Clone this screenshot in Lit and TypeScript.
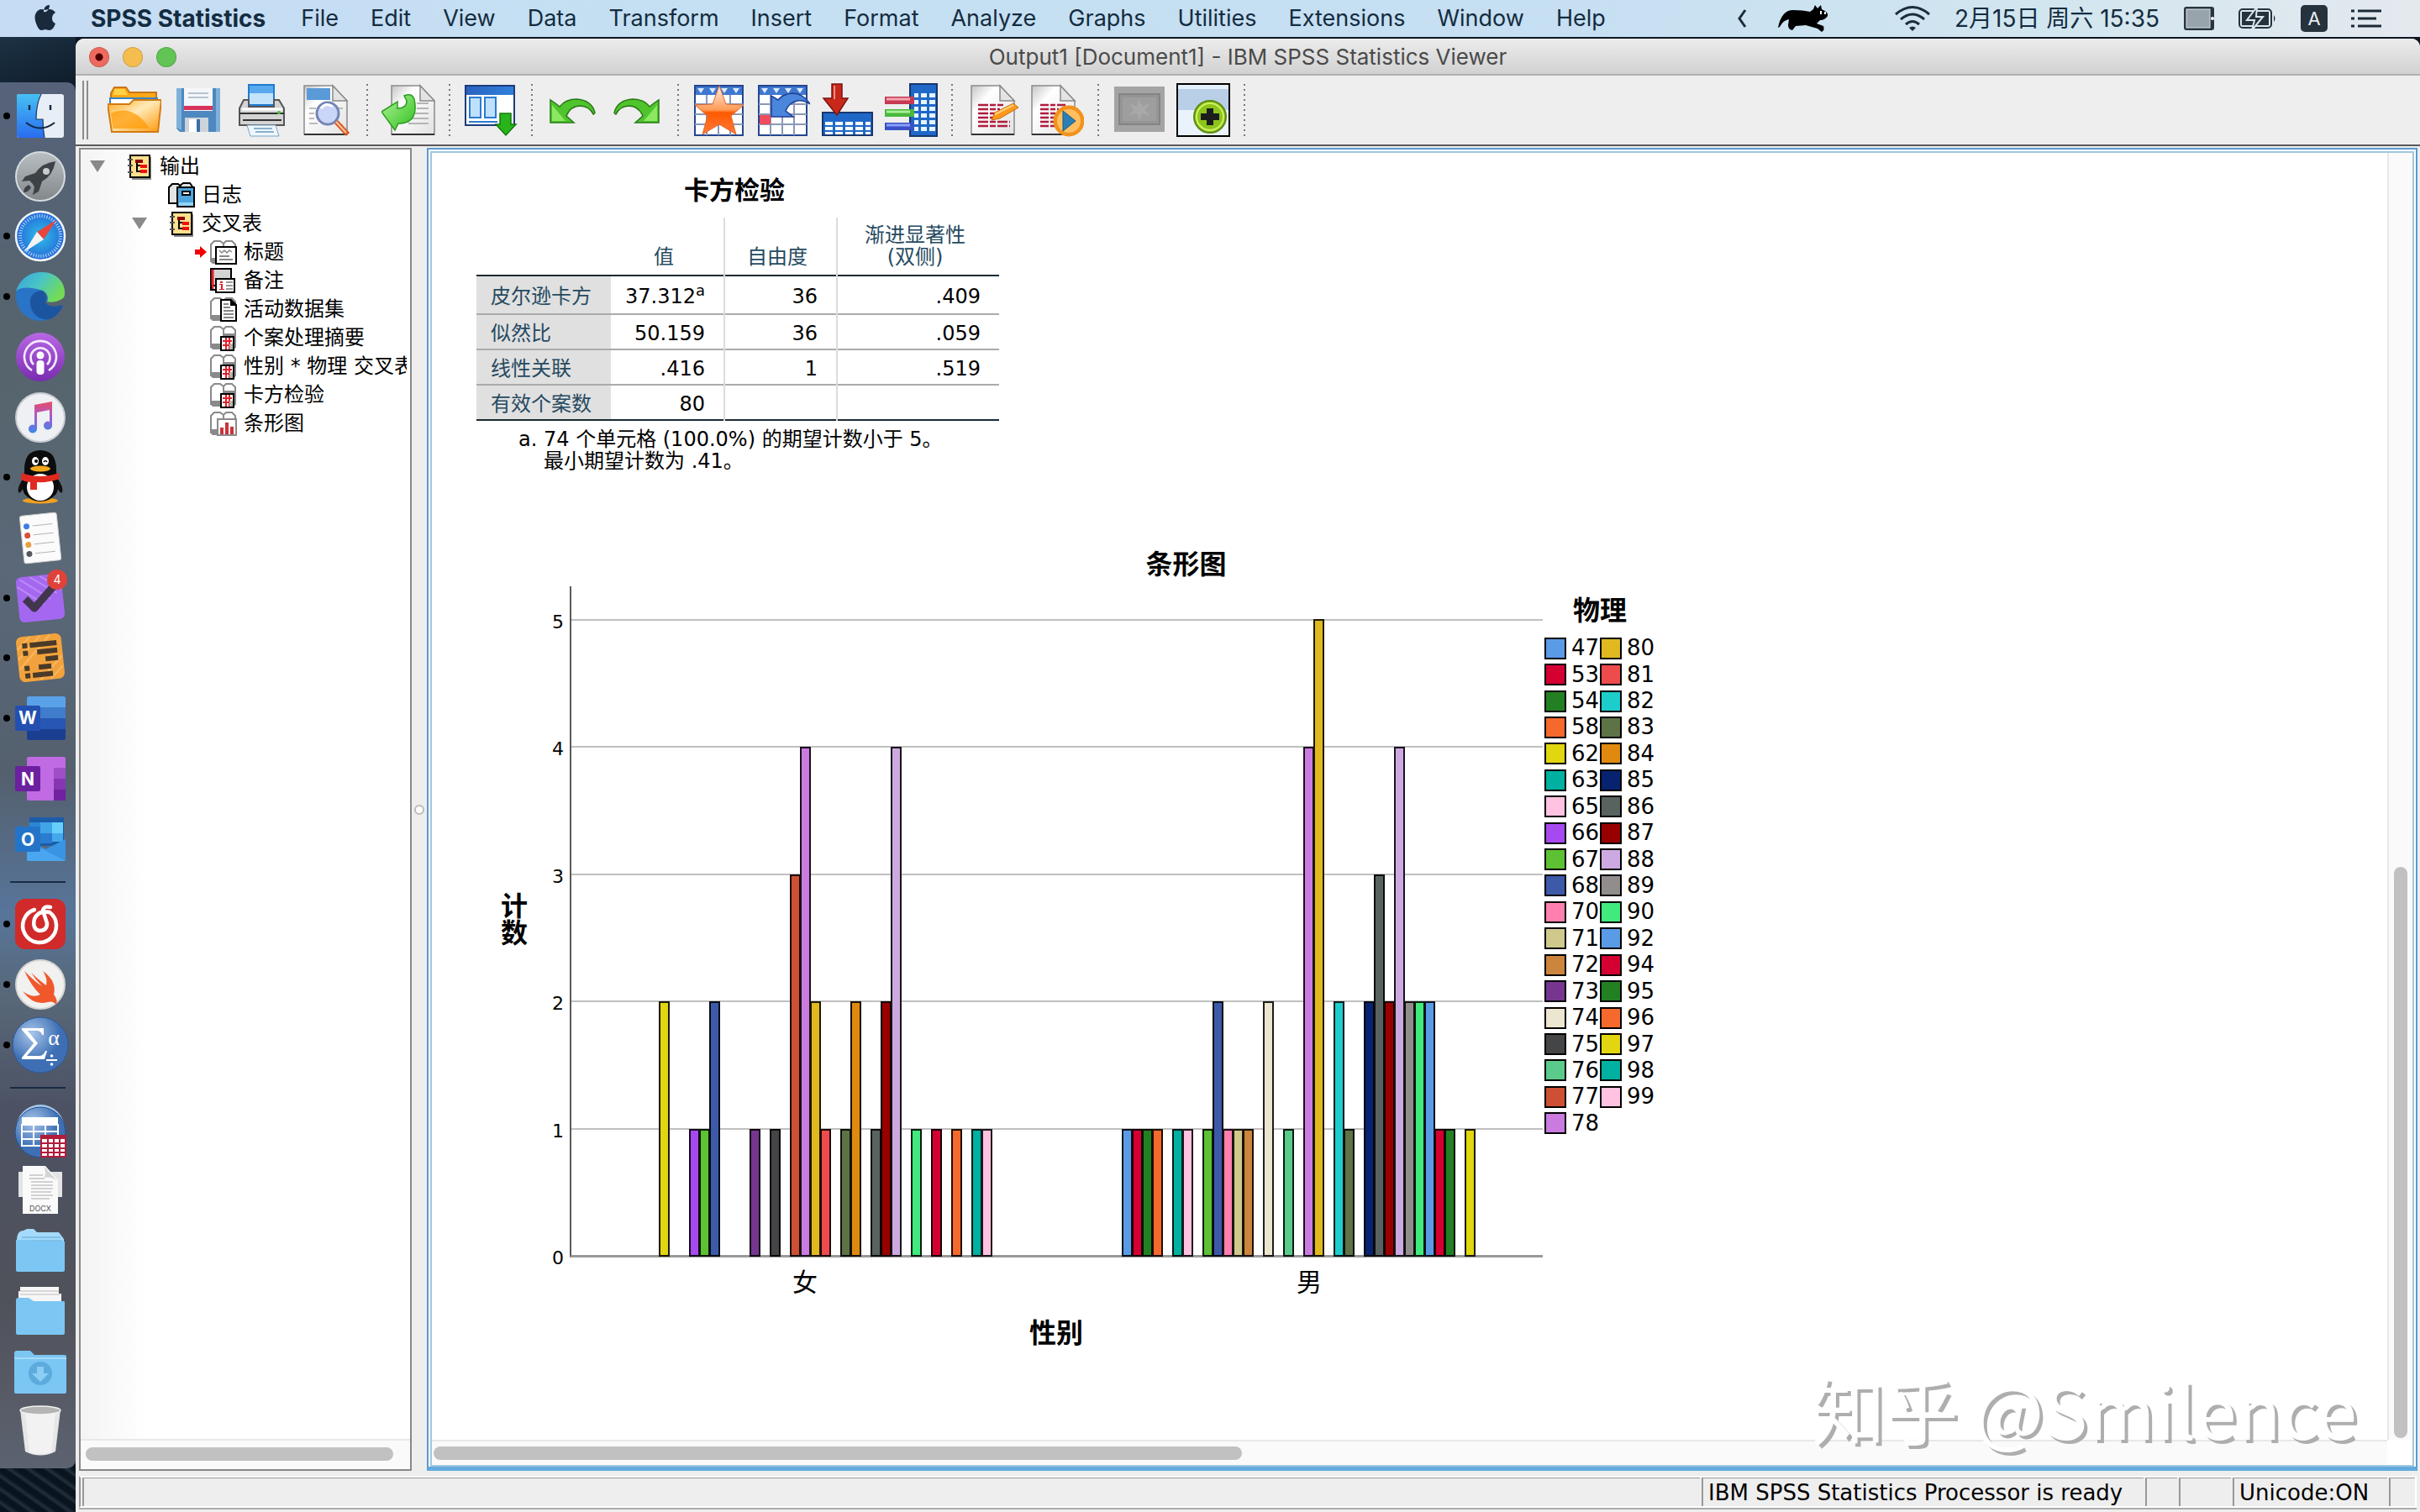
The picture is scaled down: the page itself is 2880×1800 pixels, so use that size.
import { LitElement, html, css, svg, nothing } from "lit";
import { customElement, property } from "lit/decorators.js";

/* ---------- data ---------- */

const MENUS = ["File", "Edit", "View", "Data", "Transform", "Insert", "Format", "Analyze", "Graphs", "Utilities", "Extensions", "Window", "Help"];

const SERIES: [number, string, number, number][] = [
  // score, colour, count for 女, count for 男
  [47, "#5a9be6", 0, 1], [53, "#d50032", 0, 1], [54, "#238022", 0, 1], [58, "#f6692c", 0, 1],
  [62, "#e1d60f", 2, 0], [63, "#00b0a0", 0, 1], [65, "#ffc2e0", 0, 1], [66, "#a749f0", 1, 0],
  [67, "#5cc234", 1, 1], [68, "#3c5aa8", 2, 2], [70, "#ff7faf", 0, 1], [71, "#cfc98c", 0, 1],
  [72, "#cb853c", 0, 1], [73, "#763690", 1, 0], [74, "#ece5d0", 0, 2], [75, "#444547", 1, 0],
  [76, "#5acb8a", 0, 1], [77, "#cd5034", 3, 0], [78, "#c97be0", 4, 4], [80, "#e0b920", 2, 5],
  [81, "#ee4b4c", 1, 0], [82, "#1ccdcb", 0, 2], [83, "#5d7346", 1, 1], [84, "#df8a0e", 2, 0],
  [85, "#07226e", 0, 2], [86, "#586360", 1, 3], [87, "#980000", 2, 2], [88, "#cca9e0", 4, 4],
  [89, "#918d8c", 0, 2], [90, "#40ea7c", 1, 2], [92, "#5a9be6", 0, 2], [94, "#d50032", 1, 1],
  [95, "#238022", 0, 1], [96, "#f6692c", 1, 0], [97, "#e1d60f", 0, 1], [98, "#00b0a0", 1, 0],
  [99, "#ffc2e0", 1, 0],
];
const Y_MAX = 5;

/* ---------- toolbar icons ---------- */

const page = svg`<path d="M6 3h34l17 18v40H6z" fill="url(#pg)" stroke="#8a8a8a" stroke-width="1.5"/><path d="M40 3l17 18H40z" fill="#e4e4e4" stroke="#8a8a8a" stroke-width="1.5"/><path d="M6 61h51" stroke="#333" stroke-width="2"/>`;
const defs = svg`<defs>
  <linearGradient id="pg" x1="0" y1="0" x2="1" y2="1"><stop offset="0" stop-color="#c4c4c4"/><stop offset=".3" stop-color="#fff"/><stop offset="1" stop-color="#e2e2e2"/></linearGradient>
  <linearGradient id="or" x1="0" y1="0" x2="1" y2="1"><stop offset="0" stop-color="#ffa820"/><stop offset=".45" stop-color="#ffeab8"/><stop offset="1" stop-color="#ff9606"/></linearGradient>
  <linearGradient id="st" x1="0" y1="0" x2="0" y2="1"><stop offset="0" stop-color="#fff0e4"/><stop offset=".5" stop-color="#ff9a55"/><stop offset=".55" stop-color="#ff5a00"/><stop offset="1" stop-color="#ff7a3a"/></linearGradient>
  <linearGradient id="gr" x1="0" y1="0" x2="1" y2="1"><stop offset="0" stop-color="#b2f49c"/><stop offset="1" stop-color="#2fc01c"/></linearGradient>
  <linearGradient id="bl" x1="0" y1="0" x2="1" y2="0"><stop offset="0" stop-color="#2b62c0"/><stop offset="1" stop-color="#2f80dc"/></linearGradient>
</defs>`;
const grid = svg`<rect x="3" y="3" width="57" height="59" fill="#fff" stroke="#24468f" stroke-width="2"/><rect x="4" y="4" width="55" height="10" fill="#3f78d0"/><path d="M6 6h8l-4 6zM20 6h8l-4 6zM34 6h8l-4 6zM48 6h8l-4 6z" fill="#dcebff"/><path d="M3 25h57M3 37h57M3 49h57M17 14v48M31 14v48M45 14v48" stroke="#8a98b8" stroke-width="2"/>`;
const undo = svg`<path d="M5 20v27h28l-9-8q5-12 17-12 11 1 15 10 2-1 2-2-4-15-22-16-13 0-20 9l-5-4z" fill="#4fc42c" stroke="#2a7a18" stroke-width="1.5"/><path d="M7 26v19h16z" fill="#8ce860"/>`;

const TOOL: Record<string, unknown> = {
  open: svg`<path d="M4 28V12l4-7h14l4 6h32v8l2 8z" fill="#ffa818" stroke="#c8761a" stroke-width="2"/><path d="M8 7h12l4 7H7z" fill="#ffd24a"/><path d="M3 18h56v9H3z" fill="#fff" stroke="#3b84c4" stroke-width="2"/><path d="M0 25h26l5-5h33l-4 38H5z" fill="url(#or)" stroke="#d47a12" stroke-width="2"/><path d="M4 36q26-12 46 18H6z" fill="#ff9800" opacity=".7"/>`,
  save: svg`<path d="M6 6h50l2 2v50H10l-4-4z" fill="#4d88bf"/><path d="M6 6h6v50l-6-3zM53 6h5v52h-5z" fill="#7fb0da"/><rect x="15" y="6" width="34" height="27" fill="#f4f7fa"/><path d="M20 12h24M20 17h24" stroke="#b8c4d0" stroke-width="2"/><path d="M15 27h34v5H15z" fill="#d9335c"/><rect x="16" y="41" width="28" height="17" fill="#ccd4da"/><rect x="21" y="43" width="9" height="15" fill="#fff"/><rect x="30" y="43" width="4" height="15" fill="#3a6ea6"/>`,
  print: svg`<path d="M16 2h30v24H16z" fill="#c3e3fb" stroke="#1f7bd0" stroke-width="2"/><path d="M17 3h28v9H17z" fill="#5aa9ee"/><path d="M10 20h6v8h30v-8h6l6 10v20H5V30z" fill="#d4d4d4" stroke="#555" stroke-width="2"/><path d="M5 36h53M9 44h46" stroke="#333" stroke-width="2"/><path d="M8 31h48" stroke="#fff" stroke-width="3"/><circle cx="52" cy="35" r="2" fill="#4fc33a"/><path d="M14 50h34l4 13H18z" fill="#eef7ff" stroke="#7aa4c4"/><path d="M22 54h22M24 58h22" stroke="#8ab0cc" stroke-width="2"/>`,
  preview: svg`${page}<path d="M9 6h28v14H9z" fill="#5a9ad8"/><path d="M12 30h8M12 36h6M12 42h6M12 48h10M40 30h12M44 50h8" stroke="#bbb" stroke-width="2"/><circle cx="34" cy="36" r="13" fill="#c9d6f8" stroke="#7384b4" stroke-width="3"/><path d="M26 30q6-8 14-2" stroke="#fff" stroke-width="3" fill="none"/><path d="M44 46l14 15" stroke="#d65a28" stroke-width="6"/><path d="M44 46l12 13" stroke="#ffc49a" stroke-width="2"/>`,
  export: svg`<g transform="translate(6 0)">${page}</g><path d="M42 24h14M42 30h14M40 36h16M36 42h20M32 48h24" stroke="#b4b4b4" stroke-width="2"/><path d="M0 34l19-12v8q11 0 11-9l-3-6q9-4 12 4 4 19-6 26-5 3-13 3l-4 8z" fill="url(#gr)" stroke="#2f9c22" stroke-width="1.5"/>`,
  columns: svg`<rect x="2" y="3" width="58" height="47" fill="#fff" stroke="#1c3c7c" stroke-width="2"/><rect x="3" y="4" width="56" height="10" fill="url(#bl)"/><rect x="7" y="17" width="13" height="24" fill="#bfe0fb" stroke="#2b7bd0" stroke-width="2"/><rect x="25" y="17" width="13" height="24" fill="#bfe0fb" stroke="#2b7bd0" stroke-width="2"/><path d="M6 46h34" stroke="#2b7bd0" stroke-width="2"/><path d="M43 36h13v13h6L50 62 38 49h5z" fill="#28b41a" stroke="#117a0a" stroke-width="1.5"/>`,
  undo,
  redo: svg`<g transform="matrix(-1 0 0 1 63 0)">${undo}</g>`,
  star: svg`${grid}<path d="M32 3l8 22 21 1-15 13 6 22-20-12-20 12 6-22L3 26l21-1z" fill="url(#st)" stroke="#e06a2c"/>`,
  goto: svg`${grid}<rect x="4" y="38" width="13" height="11" fill="#f04a5c"/><path d="M18 15v25h26l-9-7q4-10 14-12 8-1 15 4-8-13-21-13-12 1-17 8z" fill="#4a86dc" stroke="#1c3f94" stroke-width="1.5"/>`,
  insertCase: svg`<rect x="3" y="35" width="59" height="27" fill="#1f68c8" stroke="#18366e" stroke-width="2"/><path d="M6 46h9v4H6zM18 46h9v4h-9zM30 46h9v4h-9zM42 46h9v4h-9zM54 46h6v4h-6zM6 52h9v4H6zM18 52h9v4h-9zM30 52h9v4h-9zM42 52h9v4h-9zM54 52h6v4h-6zM6 58h9v3H6zM18 58h9v3h-9zM30 58h9v3h-9zM42 58h9v3h-9zM54 58h6v3h-6z" fill="#fff"/><path d="M14 1h12v17h7L20 38 4 18h10z" fill="#c8281c" stroke="#7c120c" stroke-width="1.5"/><path d="M17 3v16" stroke="#f08a7a" stroke-width="2"/>`,
  variables: svg`<rect x="31" y="1" width="32" height="62" fill="#1f68c8" stroke="#18366e" stroke-width="2"/><path d="M36 12h5v5h-5zM44 12h7v5h-7zM54 12h7v5h-7zM36 20h5v5h-5zM44 20h7v5h-7zM54 20h7v5h-7zM36 28h5v5h-5zM44 28h7v5h-7zM54 28h7v5h-7zM36 36h5v5h-5zM44 36h7v5h-7zM54 36h7v5h-7zM36 44h5v5h-5zM44 44h7v5h-7zM54 44h7v5h-7zM36 52h5v5h-5zM44 52h7v5h-7zM54 52h7v5h-7z" fill="#e6f4ff"/><path d="M1 16h35v9H1z" fill="#c63a52"/><path d="M3 19h28" stroke="#f4a4b0" stroke-width="3"/><path d="M1 31h35v9H1z" fill="#4ab83c"/><path d="M3 34h28" stroke="#a8f098" stroke-width="3"/><path d="M1 47h35v9H1z" fill="#3a50c8"/><path d="M3 50h28" stroke="#8aa0f4" stroke-width="3"/>`,
  edit: svg`${page}<path d="M14 26h30M14 31h26M14 36h22M14 41h20M14 46h38M14 51h38" stroke="#b01c3c" stroke-width="2.5" stroke-dasharray="12 2 7 2"/><path d="M30 44l4-9 22-11 6 5-22 13z" fill="#ff9a1c" stroke="#c86a0c"/><path d="M34 37l22-11" stroke="#ffd27a" stroke-width="2"/>`,
  run: svg`<g transform="translate(-4 0)">${page}</g><path d="M12 26h30M12 31h22M12 36h18M12 41h16M12 46h16M12 51h18" stroke="#b01c3c" stroke-width="2.5" stroke-dasharray="10 2 6 2"/><circle cx="46" cy="45" r="15" fill="#fff" stroke="#f0921c" stroke-width="7"/><circle cx="46" cy="45" r="14" fill="#ffbe60"/><path d="M39 33l15 12-15 12z" fill="#2a7fb4" stroke="#175a88"/>`,
  preview2: svg`<rect x="2" y="4" width="60" height="54" fill="#a4a4a4"/><rect x="8" y="13" width="48" height="36" fill="#959595" stroke="#848484" stroke-width="2"/><rect x="12" y="17" width="40" height="28" fill="#9e9e9e"/><path d="M32 19l3 9 9-4-5 8 6 7-10-3-3 9-3-9-10 3 6-7-5-8 9 4z" fill="#a8a8a8"/>`,
  add: svg`<rect x="1" y="1" width="62" height="62" fill="#eaf3fc" stroke="#000" stroke-width="2"/><path d="M2 6h60v26H2z" fill="#b9cfe8"/><path d="M2 2h60v5H2z" fill="#e4f0fc"/><circle cx="40" cy="40" r="19" fill="#8cc41c" stroke="#5c8c14" stroke-width="2"/><circle cx="40" cy="40" r="16" fill="none" stroke="#d0f060" stroke-width="2"/><path d="M36 30h8v6h7v8h-7v6h-8v-6h-7v-8h7z" fill="#1c1c1c"/>`,
};
const TOOL_GROUPS: [string, string][][] = [
  [["open", "Open"], ["save", "Save"], ["print", "Print"], ["preview", "Print Preview"]],
  [["export", "Export"]],
  [["columns", "Recall Dialogs"]],
  [["undo", "Undo"], ["redo", "Redo"]],
  [["star", "Go to Data"], ["goto", "Go to Case"], ["insertCase", "Go to Variable"], ["variables", "Variables"]],
  [["edit", "Edit Script"], ["run", "Run Script"]],
  [["preview2", "Designate Window"], ["add", "Select Last Output"]],
];

/* ---------- dock icons ---------- */

const DOCK: Record<string, unknown> = {
  finder: svg`<rect x="4" y="6" width="56" height="52" rx="3" fill="#e8eef6"/><path d="M7 6h26q-6 12-6 30h8q0 12 2 22H7q-3 0-3-3V9q0-3 3-3z" fill="url(#fd)"/><path d="M33 6q-6 12-6 30h8q0 12 2 22" fill="none" stroke="#1c3c66" stroke-width="1.2"/><path d="M19 19v6M44 19v6" stroke="#12263c" stroke-width="2.4"/><path d="M15 40q17 13 34 0" fill="none" stroke="#12263c" stroke-width="2"/>`,
  launchpad: svg`<circle cx="32" cy="32" r="29" fill="url(#lp)" stroke="#d4dce0" stroke-width="2"/><path d="M50 14q-16 2-24 14l-12 4-4 6 9-1q4 3 6 8l-2 9 7-4 4-12q13-7 16-24z" fill="#3c4246"/><circle cx="39" cy="26" r="4" fill="#c8ccce"/><path d="M18 42q-6 3-6 9 6 0 9-6z" fill="#3c4246"/>`,
  safari: svg`<circle cx="32" cy="32" r="29" fill="url(#sf)" stroke="#f0f4f8" stroke-width="2.5"/><circle cx="32" cy="32" r="24" fill="none" stroke="#bfe0fa" stroke-width="4" stroke-dasharray="1 2"/><path d="M51 13L28 27l8 9z" fill="#e8453c"/><path d="M13 51l15-24 8 9z" fill="#f2f4f6"/>`,
  edge: svg`<circle cx="32" cy="32" r="29" fill="#2a74c8"/><path d="M3 26C8 10 20 3 34 3c18 0 28 13 27 26-1 10-10 13-22 11 4-5 2-14-7-16C20 21 8 20 3 26z" fill="url(#eg)"/><path d="M20 40c-1-9 5-15 14-15 5 2 7 8 4 14 6 4 14 5 21 3C54 56 43 61 36 59c-9-2-15-8-16-19z" fill="#1b55a0"/><path d="M34 27c5 2 7 8 4 13 6 5 16 5 24 0v-8l-6 4q-8 4-17 2 4-8-5-11z" fill="#56626e"/>`,
  podcasts: svg`<circle cx="32" cy="32" r="29" fill="url(#pc)"/><g fill="none" stroke="#f6eaff" stroke-width="2.6"><path d="M22 48a19 19 0 1 1 20 0"/><path d="M24 41a11.500 11.500 0 1 1 16 0"/></g><circle cx="32" cy="30" r="4.500" fill="#fff"/><rect x="27.500" y="36" width="9" height="17" rx="4" fill="#fff"/>`,
  music: svg`<circle cx="32" cy="32" r="29" fill="#eef0f4" stroke="#c8ccd2" stroke-width="2"/><path d="M25 17l21-4v29a5 5 0 1 1-3-5V23l-15 3v20a5 5 0 1 1-3-5z" fill="url(#mu)"/>`,
  qq: svg`<ellipse cx="32" cy="60" rx="21" ry="3.500" fill="#f0a020"/><path d="M12 33Q4 44 6 50q2 2 5-4zM52 33q8 11 6 17-2 2-5-4z" fill="#101010"/><path d="M13 26Q12 0 32 0t19 26q5 16 0 26-8 9-19 9t-19-9q-5-10 0-26z" fill="#0c0c0c"/><ellipse cx="32" cy="44" rx="16" ry="16" fill="#fff"/><ellipse cx="26" cy="13" rx="4" ry="5" fill="#fff"/><ellipse cx="38" cy="13" rx="4" ry="5" fill="#fff"/><circle cx="27" cy="13" r="2" fill="#000"/><path d="M36 14q2-3 4 0" stroke="#000" fill="none" stroke-width="1.500"/><ellipse cx="32" cy="22" rx="12" ry="3.500" fill="#f5a81c"/><path d="M10 27q22 8 44 0l1 7q-14 5-27 4v9h-8v-9q-6 0-11-3z" fill="#e02a20"/>`,
  reminders: svg`<g transform="rotate(-6 32 32)"><rect x="10" y="4" width="44" height="57" rx="3" fill="#fbfbfb" stroke="#d0d0d0"/><circle cx="17" cy="17" r="3.500" fill="#3b7ee8"/><circle cx="17" cy="28" r="3.500" fill="#d8503c"/><circle cx="17" cy="39" r="3.500" fill="#e8a040"/><circle cx="17" cy="50" r="3.500" fill="#55585c"/><path d="M24 17h24M24 28h24M24 39h24M24 50h24" stroke="#b4b4b4"/></g>`,
  omnifocus: svg`<g transform="rotate(-6 32 32)"><rect x="5" y="5" width="54" height="54" rx="6" fill="#a468f0"/><path d="M6 16l30 24M10 8l34 26M22 6l30 22M34 6l24 18" stroke="#bb8af6" stroke-width="2"/></g><path d="M14 33l11 11 27-31" fill="none" stroke="#42364e" stroke-width="9" stroke-linejoin="round"/><circle cx="52" cy="10" r="12" fill="#e0423a"/><text x="52" y="15" text-anchor="middle" font-size="14" fill="#fff" font-family="Inter, sans-serif">4</text>`,
  outliner: svg`<g transform="rotate(-6 32 32)"><rect x="5" y="5" width="54" height="54" rx="7" fill="#f2a23c"/><path d="M6 20l16-14M6 32L34 6M6 44L46 6M30 58l28-26M42 58l16-14" stroke="#f8b862" stroke-width="2"/><path d="M12 13h6v6h-6zM21 13h32v6H21zM12 22h6v6h-6zM29 22h24v6H29zM38 31h15v6H38zM12 40h6v6h-6zM29 40h15v6H29zM12 49h6v6h-6zM21 49h24v6H21z" fill="#4a3a28"/></g>`,
  word: svg`<rect x="16" y="6" width="46" height="52" rx="2" fill="#1b3f90"/><path d="M16 8q0-2 2-2h42q2 0 2 2v11H16z" fill="#5aa2e8"/><path d="M16 19h46v13H16z" fill="#3f7ccc"/><path d="M16 32h46v13H16z" fill="#2657b4"/><rect x="2" y="17" width="30" height="30" rx="2" fill="#2350b0"/><text x="17" y="39" text-anchor="middle" font-size="21" font-weight="700" fill="#fff" font-family="Inter, sans-serif">W</text>`,
  onenote: svg`<rect x="16" y="6" width="46" height="52" rx="2" fill="#c06ae4"/><path d="M48 19h14v13H48z" fill="#a04ec8"/><path d="M48 32h14v13H48z" fill="#8636b0"/><path d="M48 45h14v13H48z" fill="#7022a0"/><rect x="2" y="17" width="30" height="30" rx="2" fill="#6c20a0"/><text x="17" y="40" text-anchor="middle" font-size="21" font-weight="700" fill="#fff" font-family="Inter, sans-serif">N</text>`,
  outlook: svg`<path d="M19 6h41v34H19z" fill="#1a5ca8"/><path d="M19 12h13v13H19z" fill="#2c86d4"/><path d="M32 12h14v13H32z" fill="#40a4e8"/><path d="M46 12h13v13H46z" fill="#66d0fa"/><path d="M32 25h14v12H32z" fill="#2a7cd0"/><path d="M46 25h13v10H46z" fill="#44a8ec"/><path d="M16 32l22 12 24-12v24q0 2-2 2H18q-2 0-2-2z" fill="#3a94e4"/><path d="M16 34l46 24H18q-2 0-2-2z" fill="#4aa6ee"/><rect x="2" y="17" width="30" height="30" rx="2" fill="#2374c8"/><text x="17" y="40" text-anchor="middle" font-size="21" font-weight="700" fill="#fff" font-family="Inter, sans-serif">O</text>`,
  netease: svg`<rect x="2" y="2" width="60" height="60" rx="12" fill="#d02a2a"/><path d="M25 15A20 20 0 1 0 43 18q-13-3-18 8-3 12 6 14 9 0 9-9l-5-15q1-6 9-4" fill="none" stroke="#fff" stroke-width="4.500" stroke-linecap="round"/>`,
  swift: svg`<circle cx="32" cy="32" r="29" fill="#f1f1f0" stroke="#d4d4d2" stroke-width="2"/><path d="M13 16q14 14 21 18-8-8-13-16 12 11 18 15 2-8-4-17 17 12 13 28 5 6 3 12-4-5-10-3-17 5-30-13 12 9 21 4-10-9-19-28z" fill="#f0582c"/>`,
  spss: svg`<circle cx="32" cy="32" r="33" fill="url(#sp)" stroke="#2c5898"/><path d="M10 12h26v8h-2q-1-5-7-5H17l12 15-13 15h14q6 0 8-6h2l-3 10H10v-2l14-17-14-16z" fill="#fff"/><text x="48" y="32" text-anchor="middle" font-size="26" fill="#fff" font-family="Liberation Serif, serif">α</text><path d="M39 50h13" stroke="#fff" stroke-width="2"/><circle cx="45.500" cy="45" r="1.800" fill="#fff"/><circle cx="45.500" cy="55" r="1.800" fill="#fff"/>`,
  dataset: svg`<circle cx="32" cy="30" r="29" fill="#a8c8ea"/><circle cx="32" cy="34" r="30" fill="url(#sp)" stroke="#24508e"/><rect x="10" y="16" width="43" height="9" fill="#fff"/><path d="M10 25h43v25H10zM10 33h43M10 42h43M24 25v25M38 25v25" fill="none" stroke="#fff" stroke-width="2"/><rect x="32" y="37" width="31" height="27" fill="#b01c3c"/><path d="M34 42h6v4h-6zM42 42h5v4h-5zM49 42h5v4h-5zM56 42h5v4h-5zM34 48h6v4h-6zM42 48h5v4h-5zM49 48h5v4h-5zM56 48h5v4h-5zM34 54h6v3h-6zM42 54h5v3h-5zM49 54h5v3h-5zM56 54h5v3h-5zM34 59h6v3h-6zM42 59h5v3h-5zM49 59h5v3h-5zM56 59h5v3h-5z" fill="#fff"/>`,
  docx: svg`<rect x="6" y="10" width="52" height="30" fill="#e4e4e4"/><path d="M11 3h27l15 17v40H11z" fill="#fafafa"/><path d="M36 3q4 10 0 14 10-2 17 5z" fill="#d4d4d4"/><path d="M19 14h16M19 18h18M21 22h26M21 26h26M21 30h26M21 34h24M21 38h26M21 42h22" stroke="#a8a8a8"/><text x="32" y="57" text-anchor="middle" font-size="9" fill="#555" font-family="Inter, sans-serif">DOCX</text>`,
  folder: svg`<path d="M4 20q0-12 8-12l4-2h8l4 4h26l6 8v10H4z" fill="#a4dafa"/><path d="M10 16h46M8 20h50" stroke="#5aa6d8"/><path d="M3 19h18l4 2h36v34q0 2-2 2H5q-2 0-2-2z" fill="#7cc6f4"/>`,
  folderDocs: svg`<path d="M8 3h46v8h3v16H6V8h2z" fill="#f6f6f6"/><path d="M8 8h46M8 12h48" stroke="#bcbcbc"/><path d="M3 19q0-3 3-3h12l6 4h36q1 0 1 2v36q0 2-2 2H5q-2 0-2-2z" fill="#7cc6f4"/>`,
  downloads: svg`<path d="M1 10q0-3 3-3h16l5 5h36q2 0 2 2v42q0 2-2 2H3q-2 0-2-2z" fill="#7cc6f4"/><path d="M1 16h62" stroke="#a4dafa" stroke-width="2"/><circle cx="32" cy="34" r="14" fill="#5cabdc"/><path d="M28 26h8v8h6L32 44 22 34h6z" fill="#8ccdf4"/>`,
  trash: svg`<path d="M8 6h48l-6 50q-18 9-36 0z" fill="#e6e6e6"/><path d="M14 10l5 47q13 4 26 0l5-47z" fill="#f2f2f2"/><ellipse cx="32" cy="7" rx="24" ry="5" fill="#b4b4b4" stroke="#f2f2f2" stroke-width="1.500"/>`,
};
const dockDefs = svg`<defs>
  <linearGradient id="fd" x1="0" y1="0" x2="0" y2="1"><stop offset="0" stop-color="#46c0f4"/><stop offset="1" stop-color="#2a6cf0"/></linearGradient>
  <linearGradient id="lp" x1="0" y1="0" x2="0" y2="1"><stop offset="0" stop-color="#b8bec2"/><stop offset="1" stop-color="#82888a"/></linearGradient>
  <radialGradient id="sf"><stop offset="0" stop-color="#30c0e8"/><stop offset="1" stop-color="#2468d8"/></radialGradient>
  <linearGradient id="eg" x1="0" y1="0" x2="1" y2=".5"><stop offset="0" stop-color="#3aa0dc"/><stop offset=".5" stop-color="#48c4c8"/><stop offset="1" stop-color="#74dc54"/></linearGradient>
  <linearGradient id="pc" x1="0" y1="0" x2="0" y2="1"><stop offset="0" stop-color="#b868e4"/><stop offset="1" stop-color="#7a2cb0"/></linearGradient>
  <linearGradient id="mu" x1="0" y1="0" x2="0" y2="1"><stop offset="0" stop-color="#e84c68"/><stop offset=".5" stop-color="#a45ad0"/><stop offset="1" stop-color="#3a8ae8"/></linearGradient>
  <radialGradient id="sp" cx=".35" cy=".3"><stop offset="0" stop-color="#a8c6ea"/><stop offset="1" stop-color="#3e6fb4"/></radialGradient>
</defs>`;
const DOCK_ITEMS: [string, string, boolean][] = [
  ["finder", "Finder", true], ["launchpad", "Launchpad", false], ["safari", "Safari", true], ["edge", "Edge", true],
  ["podcasts", "Podcasts", false], ["music", "Music", false], ["qq", "QQ", true], ["reminders", "Reminders", false],
  ["omnifocus", "OmniFocus", true], ["outliner", "OmniOutliner", true], ["word", "Word", true], ["onenote", "OneNote", false],
  ["outlook", "Outlook", false], ["-", "", false], ["netease", "NetEase Music", true], ["swift", "Swift Playgrounds", true],
  ["spss", "SPSS Statistics", true], ["-", "", false], ["dataset", "Data stack", false], ["docx", "Documents stack", false],
  ["folder", "Folder", false], ["folderDocs", "Documents", false], ["downloads", "Downloads", false], ["trash", "Trash", false],
];

/* ---------- outline icons ---------- */

const bookBack = svg`<path d="M1 26V6l4-4h7l4 3 3-3h7l4 4v20z" fill="#fff" stroke="#8a8a8a" stroke-width="2"/><path d="M1 22h12v7H3l-2-2z" fill="#8a8a8a"/><path d="M16 5v12" stroke="#9a8a8a" stroke-width="2"/>`;
const tableBook = svg`${bookBack}<path d="M15 10h15v18H15z" fill="#8a8a8a"/><rect x="13" y="14" width="15" height="16" fill="#fff" stroke="#000" stroke-width="2"/><path d="M15 19h11M15 24h11M19 15v14M23 15v14" stroke="#e0202c" stroke-width="2"/><path d="M23 22h4v7h-4z" fill="#b4b4a8"/>`;
const LEAF: Record<string, unknown> = {
  root: svg`<rect x="7" y="4" width="23" height="27" fill="#888"/><rect x="5" y="2" width="23" height="26" fill="#ffe08c" stroke="#000" stroke-width="2"/><path d="M2 7h6M2 14h6M2 22h6" stroke="#555" stroke-width="2"/><path d="M13 9v12h5M13 14h5" stroke="#000" stroke-width="2" fill="none"/><path d="M11 7h9v4h-9z" fill="#8c0000"/><path d="M17 13h8v4h-8zM17 19h8v4h-8z" fill="#f01010"/>`,
  log: svg`<path d="M1 25V6l4-4h7l3 3v20z" fill="#e4e4e4" stroke="#000" stroke-width="2"/><path d="M14 4l4-3h8l3 4" fill="#ddd" stroke="#000" stroke-width="2"/><rect x="11" y="6" width="20" height="23" fill="#4ea4dc" stroke="#000" stroke-width="2"/><path d="M13 24h17v4H13z" fill="#90d4f6"/><rect x="17" y="11" width="9" height="4" fill="#fff" stroke="#000" stroke-width="2"/>`,
  title: svg`${bookBack}<rect x="7" y="9" width="24" height="20" fill="#fff" stroke="#000" stroke-width="2"/><path d="M11 13l3 3 3-3 3 3 3-3 3 2" stroke="#888" fill="none" stroke-width="1.500"/><path d="M11 20h12M11 24h16" stroke="#888" stroke-width="2"/>`,
  notes: svg`<path d="M1 1h24v20H1z" fill="#d4d4d4" stroke="#000" stroke-width="2"/><path d="M3 2v24" stroke="#e0202c" stroke-width="3"/><path d="M1 20v6h6" stroke="#000" stroke-width="2" fill="none"/><rect x="7" y="13" width="22" height="16" fill="#fff" stroke="#000" stroke-width="2"/><path d="M12 16h3v2h-3zM11 19h4v6h2v1h-6v-1h2v-5h-2z" fill="#e0202c"/><path d="M19 17h8M19 21h8M19 25h8" stroke="#999" stroke-width="2"/>`,
  dataset: svg`${bookBack}<path d="M13 4h12l6 6v19H13z" fill="#fff" stroke="#000" stroke-width="2"/><path d="M24 4v7h7z" fill="#000"/><path d="M16 9h6M16 13h8M16 17h12M16 21h12M16 25h12" stroke="#888" stroke-width="2"/>`,
  table: tableBook,
  chart: svg`${bookBack}<rect x="9" y="10" width="22" height="19" fill="#fff" stroke="#8a8a8a" stroke-width="2"/><path d="M14 28v-8M20 28V14M26 28v-9" stroke="#c8343c" stroke-width="4"/>`,
};
const TREE: [number, string, string, boolean, boolean][] = [
  [0, "root", "输出", true, false], [1, "log", "日志", false, false], [1, "root", "交叉表", true, false],
  [2, "title", "标题", false, true], [2, "notes", "备注", false, false], [2, "dataset", "活动数据集", false, false],
  [2, "table", "个案处理摘要", false, false], [2, "table", "性别 * 物理 交叉表", false, false],
  [2, "table", "卡方检验", false, false], [2, "chart", "条形图", false, false],
];

const reset = css`
  * { box-sizing: border-box; }
  button { appearance: none; border: 0; background: none; padding: 0; margin: 0; font: inherit; color: inherit; text-align: left; }
  svg { display: block; }
`;

@customElement("mac-menu-bar")
class MacMenuBar extends LitElement {
  static styles = [reset, css`
    :host { display: flex; align-items: center; justify-content: space-between; height: 44px; padding: 0 46px 0 40px;
      background: linear-gradient(90deg, #c6dcf4 0, #c5e0f2 30%, #c6dff2 65%, #d2e6ef 85%, #e4e9ee 100%);
      color: #142c40; font: 27px/44px Inter, "Noto Sans CJK SC", sans-serif; }
    nav, .status { display: flex; align-items: center; }
    nav { gap: 38px; }
    .app { font-size: 28px; font-weight: 700; padding: 0 4px 0 2px; }
    .status { gap: 28px; font-size: 28px; }
    .cat { margin: 0 48px 0 6px; }
  `];
  render() {
    return html`
      <nav aria-label="Menu bar">
        <button aria-label="Apple"><svg width="28" height="32" viewBox="0 0 28 32"><path d="M19 0q0 5-3 7-2 2-4 1 0-5 3-7 2-1 4-1zM22 16q0-5 4-7-3-4-7-4-3 0-5 1-2-1-5-1-3 0-6 4-3 5 0 13 3 8 6 8 2 0 5-1 3 1 5 1 4 0 7-8-4-2-4-6z" fill="#182a3c"/></svg></button>
        <button class="app">SPSS Statistics</button>
        ${MENUS.map((m) => html`<button>${m}</button>`)}
      </nav>
      <div class="status">
        <svg width="14" height="24" viewBox="0 0 14 24"><path d="M11 2L4 12l7 10" fill="none" stroke="#1c2c3c" stroke-width="3"/></svg>
        <svg class="cat" width="64" height="32" viewBox="0 0 64 32"><path d="M2 27Q6 6 20 6q12 0 20 2l4-3 2-5 3 4 4-4 1 5q8 3 7 8-3 5-9 5l-4 4 8 3q2 5-2 7l-5-4-14-4-12 1-4 5q-5-1-5-6l1-7Q8 18 4 26z" fill="#000"/><path d="M53 7v4M58 8v3" stroke="#fff" stroke-width="2"/></svg>
        <svg width="44" height="32" viewBox="0 0 44 32" fill="none" stroke="#1c2c3c" stroke-width="3"><path d="M2 11q20-17 40 0M8 17q14-12 28 0M14 23q8-7 16 0"/><path d="M18 27l4 4 4-4q-4-3-8 0z" fill="#1c2c3c" stroke="none"/></svg>
        <span>2月15日 周六 15:35</span>
        <svg width="38" height="30" viewBox="0 0 38 30"><rect x="1" y="1" width="36" height="28" rx="3" fill="#2a343e"/><rect x="4" y="4" width="28" height="22" fill="#98a4ac" stroke="#d8e2e8" stroke-width="1"/><circle cx="35" cy="15" r="2" fill="#fff"/></svg>
        <svg width="46" height="28" viewBox="0 0 46 28"><rect x="1" y="3" width="38" height="22" rx="4" fill="none" stroke="#26323c" stroke-width="2"/><rect x="4" y="6" width="32" height="16" fill="#26323c"/><path d="M42 10q3 4 0 8z" fill="#26323c"/><path d="M22 0L10 16h9l-3 12 13-16h-8z" fill="#26323c" stroke="#dce8f0" stroke-width="2"/></svg>
        <svg width="32" height="32" viewBox="0 0 32 32"><rect width="32" height="32" rx="5" fill="#26323c"/><text x="16" y="24" text-anchor="middle" font-size="22" fill="#e8eef2" font-family="Inter, sans-serif">A</text></svg>
        <svg width="36" height="22" viewBox="0 0 36 22" stroke="#1c2a36" stroke-width="3"><path d="M0 2h4M8 2h28M0 11h4M8 11h22M0 20h4M8 20h28"/></svg>
      </div>`;
  }
}

@customElement("mac-dock")
class MacDock extends LitElement {
  static styles = [reset, css`
    :host { display: flex; flex-direction: column; width: 90px; padding: 54px 0 52px;
      background: linear-gradient(160deg, #1c3244, #0e1a28) top / 100% 66px no-repeat,
        repeating-linear-gradient(35deg, #0a141e 0 6px, #22303e 9px, #0c1824 13px); }
    ul { flex: 1; display: flex; flex-direction: column; list-style: none; margin: 0; padding: 4px 0 8px;
      border-radius: 0 10px 10px 0; background: linear-gradient(#55627a 0, #56646c 20%, #5a6878 35%, #54606e 50%, #57759a 60%, #586878 66%, #4c5264 74%, #50525a 88%, #5c6270 100%); }
    li { flex: 1; display: flex; align-items: center; gap: 4px; padding-left: 4px; }
    .dot { width: 8px; height: 8px; border-radius: 50%; }
    .on { background: #000; }
    .sep { flex: none; height: 30px; padding-left: 12px; }
    .sep hr { width: 66px; margin: 0; border: 0; border-top: 2px solid #1a2c44; }
    svg { overflow: visible; }
  `];
  render() {
    return html`<ul aria-label="Dock">
      ${DOCK_ITEMS.map(([id, name, on]) => id === "-"
        ? html`<li class="sep" role="separator"><hr></li>`
        : html`<li><span class="dot ${on ? "on" : ""}"></span><button aria-label=${name}><svg width="64" height="64" viewBox="0 0 64 64">${dockDefs}${DOCK[id]}</svg></button></li>`)}
    </ul>`;
  }
}

@customElement("tool-bar")
class ToolBar extends LitElement {
  static styles = [reset, css`
    :host { display: flex; align-items: center; gap: 12px; height: 84px; padding-left: 8px;
      background: #eee; border-bottom: 2px solid #5a585c; }
    .grip { width: 7px; height: 70px; margin-right: 11px; border: solid #8c8c8c; border-width: 0 2px; }
    .sep { width: 10px; height: 62px; background: repeating-linear-gradient(#777 0 2px, transparent 2px 6px) center / 2px 100% no-repeat; }
  `];
  render() {
    return html`<span class="grip"></span>
      ${TOOL_GROUPS.map((g) => html`
        ${g.map(([id, name]) => html`<button aria-label=${name}><svg width="64" height="64" viewBox="0 0 64 64">${defs}${TOOL[id]}</svg></button>`)}
        <span class="sep"></span>`)}`;
  }
}

@customElement("outline-tree")
class OutlineTree extends LitElement {
  static styles = [reset, css`
    :host { display: flex; flex-direction: column; width: 396px; background: #fff; border: 2px solid #8a8888; }
    ul { flex: 1; list-style: none; margin: 0; padding: 3px 4px 0 0; overflow: hidden;
      background: linear-gradient(90deg, #f4f4f4 0, #fff 80px); }
    li { padding-left: calc(11px + var(--depth) * 50px); }
    button { display: flex; align-items: center; width: 100%; height: 34px; overflow: hidden; white-space: nowrap;
      font: 24px/34px "DejaVu Sans", "Noto Sans CJK SC", sans-serif; color: #000; }
    .lead { flex: none; display: flex; width: 43px; }
    .now { justify-content: flex-end; padding-right: 4px; }
    .icon { flex: none; width: 32px; margin-right: 8px; }
    .track { height: 36px; padding: 8px 20px 6px 6px; background: #fafafa; border-top: 2px solid #e8e8e8; }
    .thumb { height: 16px; border-radius: 8px; background: #c1c1c1; }
  `];
  render() {
    return html`<ul role="tree" aria-label="Output outline">
      ${TREE.map(([depth, icon, label, open, now]) => html`<li role="treeitem" style="--depth:${depth}"><button>
        <span class="lead ${now ? "now" : ""}">${open ? html`<svg width="18" height="16" viewBox="0 0 18 16"><path d="M0 1h18L9 15z" fill="#8a8a8a"/></svg>` : nothing}${now ? html`<svg width="14" height="14" viewBox="0 0 14 14"><path d="M0 4h6V0l8 7-8 7v-4H0z" fill="#f00000"/></svg>` : nothing}</span>
        <svg class="icon" width="32" height="31" viewBox="0 0 32 31">${LEAF[icon]}</svg>${label}</button></li>`)}
      </ul><div class="track"><div class="thumb"></div></div>`;
  }
}

@customElement("chi-square-table")
class ChiSquareTable extends LitElement {
  static styles = [reset, css`
    :host { display: block; font: 24px/26px "DejaVu Sans", "Noto Sans CJK SC", sans-serif; color: #000; }
    table { border-collapse: collapse; table-layout: fixed; width: 622px; }
    caption { font-size: 30px; font-weight: 700; line-height: 40px; padding: 0 8px 12px 0; }
    th { font-weight: 400; color: #264a60; padding: 0; }
    thead th { height: 69px; padding: 0 8px 8px 0; vertical-align: bottom; text-align: center; }
    .name { width: 160px; }
    .value { width: 135px; }
    .df { width: 134px; }
    th + th + th, td + td { border-left: 2px solid #dcdcdc; }
    thead, tbody { border-bottom: 2px solid #1c2a34; }
    tbody tr { height: 42px; }
    tbody tr:first-child { height: 46px; }
    tbody tr + tr { border-top: 2px solid #aaa; }
    tbody th { text-align: left; padding: 4px 0 0 17px; background: #e0e0e0; }
    td { text-align: right; padding: 4px 22px 0 0; }
    sup { font-size: 18px; line-height: 0; }
    p { margin: 9px 0 0 50px; padding-left: 30px; text-indent: -30px; }
  `];
  render() {
    const rows: [string, unknown, string, string][] = [
      ["皮尔逊卡方", html`37.312<sup>a</sup>`, "36", ".409"], ["似然比", "50.159", "36", ".059"],
      ["线性关联", ".416", "1", ".519"], ["有效个案数", "80", "", ""]];
    return html`<table>
      <caption>卡方检验</caption>
      <thead><tr><th class="name"></th><th class="value">值</th><th class="df">自由度</th><th>渐进显著性<br>(双侧)</th></tr></thead>
      <tbody>${rows.map(([n, a, b, c]) => html`<tr><th scope="row">${n}</th><td>${a}</td><td>${b}</td><td>${c}</td></tr>`)}</tbody>
    </table>
    <p>a. 74 个单元格 (100.0%) 的期望计数小于 5。<br>最小期望计数为 .41。</p>`;
  }
}

@customElement("bar-chart")
class BarChart extends LitElement {
  static styles = [reset, css`
    :host { display: block; color: #000; font: 26px/31px "DejaVu Sans", "Noto Sans CJK SC", sans-serif; }
    figure { margin: 0; display: grid; grid-template-columns: 90px 21px 1158px 132px; width: 1689px; }
    h2, h3 { margin: 0; font-size: 32px; line-height: 40px; font-weight: 700; text-align: center; }
    .title { grid-column: 1 / -1; width: 1689px; padding-bottom: 6px; }
    .ytitle { align-self: center; justify-self: center; width: 32px; line-height: 32px; padding-bottom: 6px; }
    .ticks { display: flex; flex-direction: column; justify-content: space-between; margin: 28px 10px -16px 0; font-size: 22px; line-height: 30px; text-align: right; }
    .plot { display: grid; height: 799px; border-left: 2px solid #5a5a5a; border-bottom: 3px solid #999; }
    .lines, .bars { grid-area: 1 / 1; margin-top: 39px; display: flex; }
    .lines { flex-direction: column; }
    .lines i { flex: 1; border-top: 2px solid #c0c0c0; }
    .bars { justify-content: space-between; padding: 0 57px 0 56px; margin-bottom: -2px; }
    .group { display: grid; grid-template-columns: repeat(37, 12px); align-items: end; }
    .bar { width: 13px; border: 2px solid rgb(0 0 0 / 0.88); }
    .legend { margin-top: 9px; padding-left: 2px; width: 134px; }
    ul { display: grid; grid-template-rows: repeat(19, 1fr); grid-auto-flow: column; grid-auto-columns: 66px; height: 597px; margin: 9px 0 0; padding: 0; list-style: none; }
    li { display: flex; align-items: center; gap: 6px; }
    .swatch { flex: none; width: 26px; height: 26px; border: 2px solid #000; }
    .cats { grid-column: 3; display: flex; justify-content: space-between; padding: 12px 56px 0 58px; font-size: 30px; line-height: 36px; text-align: center; }
    .cats span { width: 444px; }
    .xtitle { grid-column: 3; padding-top: 22px; }
  `];
  render() {
    const group = (k: 2 | 3) => html`<div class="group">${SERIES.map((s) => s[k]
      ? html`<div class="bar" style="height:${(s[k] / Y_MAX) * 100}%;background-color:${s[1]}"></div>` : html`<span></span>`)}</div>`;
    return html`<figure>
      <h2 class="title">条形图</h2>
      <h3 class="ytitle">计数</h3>
      <div class="ticks">${[5, 4, 3, 2, 1, 0].map((n) => html`<span>${n}</span>`)}</div>
      <div class="plot"><div class="lines"><i></i><i></i><i></i><i></i><i></i></div><div class="bars">${group(2)}${group(3)}</div></div>
      <div class="legend"><h3>物理</h3><ul>${SERIES.map((s) => html`<li><span class="swatch" style="background:${s[1]}"></span>${s[0]}</li>`)}</ul></div>
      <div class="cats"><span>女</span><span>男</span></div>
      <h3 class="xtitle">性别</h3>
    </figure>`;
  }
}

@customElement("app-root")
class AppRoot extends LitElement {
  @property() name = "Output1 [Document1] - IBM SPSS Statistics Viewer";
  static styles = [reset, css`
    :host { display: flex; flex-direction: column; height: 100vh; background: #0b1622; overflow: hidden; }
    .desk { flex: 1; display: flex; min-height: 0; }
    .window { flex: 1; min-width: 0; display: flex; flex-direction: column; margin-top: 2px; background: #eee; border-radius: 10px 10px 0 0; overflow: hidden; }
    .titlebar { display: grid; grid-template-columns: 1fr auto 1fr; align-items: center; height: 44px; padding: 2px 16px 0;
      background: linear-gradient(#ececec, #d1d1d1); border-bottom: 2px solid #b0b0b0; }
    .titlebar h1 { margin: 0; font: 400 26px/40px Inter, sans-serif; color: #4a4a4a; }
    .lights { display: flex; gap: 16px; }
    .lights button { width: 24px; height: 24px; border-radius: 50%; border: 1px solid rgb(0 0 0 / 0.15); }
    .close { background: radial-gradient(#4c0000 0 4px, #ee6a5f 5px); }
    .min { background: #f5bd4f; }
    .max { background: #61c454; }
    .panes { flex: 1; min-height: 0; display: flex; padding: 2px 3px 4px 4px; }
    .split { width: 18px; display: grid; place-items: center; }
    .split i { width: 12px; height: 12px; border: 2px solid #bbb; border-radius: 50%; background: #fff; }
    .viewer { flex: 1; min-width: 0; display: flex; border: 2px solid #5b9acf; border-bottom: 5px solid #62aade; padding: 2px 2px 0; background: #fff; }
    .inner { flex: 1; min-width: 0; display: grid; grid-template-columns: minmax(0, 1fr) 30px; grid-template-rows: minmax(0, 1fr) 30px; border: 2px solid #a0c8de; position: relative; }
    .report { overflow: hidden; padding: 25px 53px 0; }
    .report bar-chart { margin-top: 90px; }
    .v { display: flex; align-items: flex-end; padding: 0 6px 2px; background: #fafafa; border-left: 2px solid #e8e8e8; }
    .v i { width: 16px; height: 680px; border-radius: 8px; background: #c1c1c1; }
    .h { padding: 6px 2px; background: #fafafa; border-top: 2px solid #e8e8e8; }
    .h i { display: block; width: 962px; height: 16px; border-radius: 8px; background: #c1c1c1; }
    .mark { position: absolute; right: 66px; bottom: 12px; margin: 0; font: 400 87px/112px "Noto Sans CJK SC", sans-serif; color: #fff; text-shadow: 4px 4px 0 #aeaeae; white-space: nowrap; }
    footer { display: flex; margin: 2px 4px 5px; height: 38px; border: 2px solid #fff; border-left-color: #999; font: 26px/34px "DejaVu Sans", sans-serif; color: #000; box-shadow: 0 2px 0 #aaa; }
    footer span { padding: 0 6px; border: 1px solid #999; border-width: 1px 0 0 2px; margin-left: 2px; min-width: 38px; white-space: nowrap; }
    footer .fill { flex: 1; }
    footer .wide { min-width: 62px; }
    footer .ready { min-width: 526px; }
    footer .unicode { min-width: 184px; }
    footer .end { min-width: 31px; }
  `];
  render() {
    return html`
      <mac-menu-bar></mac-menu-bar>
      <div class="desk">
        <mac-dock></mac-dock>
        <main class="window">
          <header class="titlebar">
            <div class="lights"><button class="close" aria-label="Close"></button><button class="min" aria-label="Minimise"></button><button class="max" aria-label="Zoom"></button></div>
            <h1>${this.name}</h1>
          </header>
          <tool-bar></tool-bar>
          <div class="panes">
            <outline-tree></outline-tree>
            <div class="split"><i></i></div>
            <section class="viewer"><div class="inner">
              <div class="report"><chi-square-table></chi-square-table><bar-chart></bar-chart></div>
              <div class="v"><i></i></div>
              <div class="h"><i></i></div>
              <p class="mark">知乎 @Smilence</p>
            </div></section>
          </div>
          <footer><span class="fill"></span><span class="ready">IBM SPSS Statistics Processor is ready</span><span></span><span class="wide"></span><span class="unicode">Unicode:ON</span><span class="end"></span></footer>
        </main>
      </div>`;
  }
}
